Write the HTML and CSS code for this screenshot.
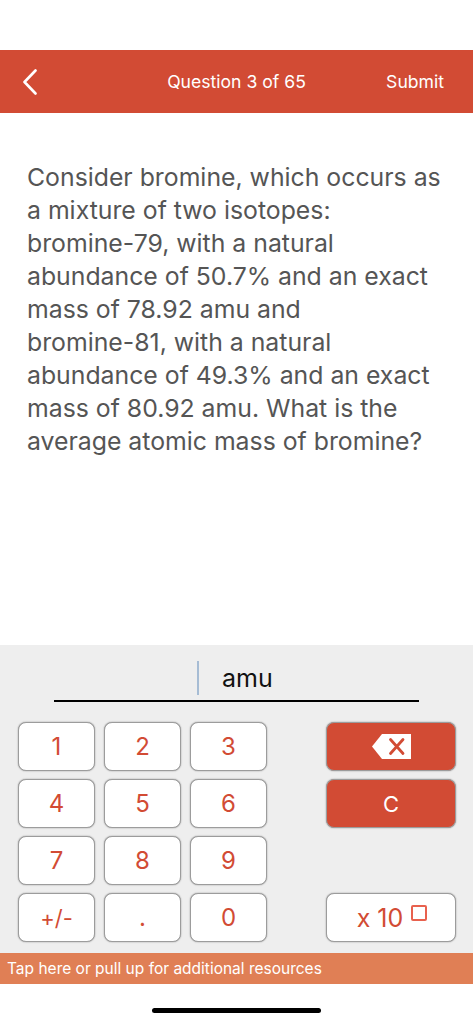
FILE: index.html
```html
<!DOCTYPE html>
<html>
<head>
<meta charset="utf-8">
<link rel="stylesheet" href="styles.css">
</head>
<body>
<div class="screen">
  <div class="status"></div>
  <header class="nav">
    <div class="back">
      <svg width="16" height="26" viewBox="0 0 16 26"><path d="M13.5 1.5 L2.5 13 L13.5 24.5" fill="none" stroke="#fff" stroke-width="2.6" stroke-linecap="round" stroke-linejoin="round"/></svg>
    </div>
    <div class="title">Question 3 of 65</div>
    <div class="submit">Submit</div>
  </header>
  <main class="question">
    <p>Consider bromine, which occurs as<br>a mixture of two isotopes:<br>bromine-79, with a natural<br>abundance of 50.7% and an exact<br>mass of 78.92 amu and<br>bromine-81, with a natural<br>abundance of 49.3% and an exact<br>mass of 80.92 amu. What is the<br>average atomic mass of bromine?</p>
  </main>
  <section class="panel">
    <div class="answer">
      <div class="field">
        <span class="cursor"></span>
        <span class="unit">amu</span>
      </div>
    </div>
    <div class="keypad">
      <div class="key">1</div>
      <div class="key">2</div>
      <div class="key">3</div>
      <div class="blank"></div>
      <div class="key red">
        <svg width="41" height="27" viewBox="0 0 41 27"><path d="M11 1 H40 V26 H11 L1 13.5 Z" fill="#fff"/><path d="M19.5 6.5 L32 20.5 M32 6.5 L19.5 20.5" stroke="#D24B34" stroke-width="2.8" stroke-linecap="round"/></svg>
      </div>
      <div class="key">4</div>
      <div class="key">5</div>
      <div class="key">6</div>
      <div class="blank"></div>
      <div class="key red">C</div>
      <div class="key">7</div>
      <div class="key">8</div>
      <div class="key">9</div>
      <div class="blank"></div>
      <div class="blank"></div>
      <div class="key small">+/-</div>
      <div class="key">.</div>
      <div class="key">0</div>
      <div class="blank"></div>
      <div class="key sci">x 10<span class="box"></span></div>
    </div>
  </section>
  <div class="resources">Tap here or pull up for additional resources</div>
  <div class="home"><span class="bar"></span></div>
</div>
</body>
</html>
```

FILE: styles.css
```css
* { box-sizing: border-box; }
html, body { margin: 0; padding: 0; background: #fff; }
body { font-family: Inter, "Liberation Sans", Arial, sans-serif; }
.screen { width: 473px; height: 1024px; display: flex; flex-direction: column; overflow: hidden; }
.status { height: 50px; flex: none; }
.nav { height: 63px; flex: none; background: #D24B34; color: #fff; display: grid; grid-template-columns: 1fr auto 1fr; align-items: center; }
.back { padding-left: 22px; display: flex; align-items: center; padding-top: 1px; }
.title { text-align: center; font-size: 17.6px; }
.submit { justify-self: end; padding-right: 29px; font-size: 17.6px; }
.question { flex: 1; padding: 48px 10px 0 27px; }
.question p { margin: 0; font-size: 24.8px; line-height: 33px; color: #555; white-space: nowrap; }
.panel { height: 308px; flex: none; background: #EEEEEE; padding-top: 16px; }
.answer { padding: 0 54px 0 54px; }
.field { height: 41px; border-bottom: 2px solid #000; display: flex; align-items: flex-start; justify-content: flex-start; padding-left: 143px; }
.cursor { width: 2px; height: 34px; background: #A6BCD4; margin-right: 23px; }
.unit { font-size: 25px; color: #111; line-height: 34px; }
.keypad { margin-top: 20px; padding: 0 17px 0 18px; display: grid; grid-template-columns: 77px 77px 77px 1fr 130px; grid-auto-rows: 49px; column-gap: 9px; row-gap: 8px; }
.key { background: #fff; border: 1px solid #9c9c9c; border-radius: 8px; box-shadow: 0 0 1.5px rgba(0,0,0,0.45); display: flex; align-items: center; justify-content: center; color: #D24B34; font-size: 24px; font-weight: 400; }
.key.small { font-size: 22px; }
.key.red { background: #D24B34; color: #fff; font-size: 22px; }
.key.sci { font-size: 25px; padding-left: 2px; }
.box { width: 16px; height: 16px; border: 2px solid #E8614E; border-radius: 2px; margin-left: 8px; margin-top: -9px; }
.resources { height: 31px; flex: none; background: #E07F55; color: #fff; font-size: 15.5px; line-height: 31px; padding-left: 7px; }
.home { height: 40px; flex: none; display: flex; justify-content: center; padding-top: 24px; }
.bar { width: 169px; height: 5px; border-radius: 3px; background: #000; }
```
